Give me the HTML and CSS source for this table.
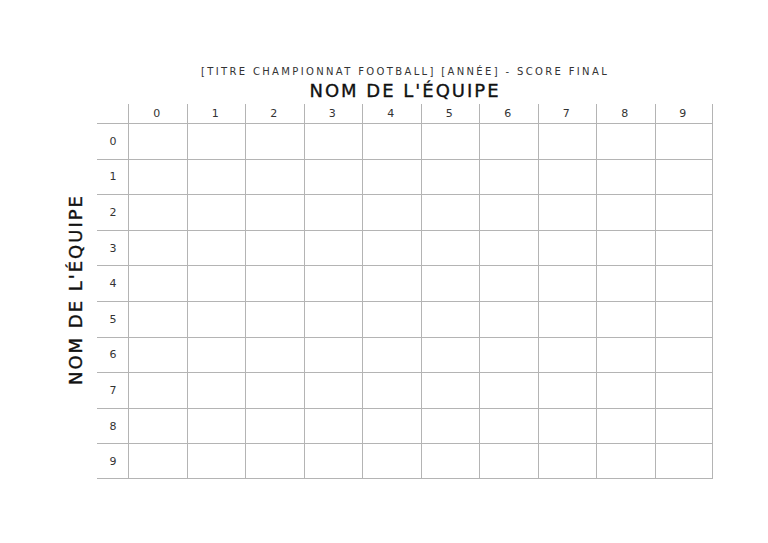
FILE: index.html
```html
<!DOCTYPE html>
<html lang="fr">
<head>
<meta charset="utf-8">
<title>Score final</title>
<link rel="stylesheet" href="styles.css">
</head>
<body>
<div class="page">
  <header class="titles">
    <div class="subtitle">[TITRE CHAMPIONNAT FOOTBALL] [ANNÉE] - SCORE FINAL</div>
    <div class="team team-top">NOM DE L'ÉQUIPE</div>
  </header>
  <div class="board">
    <div class="side"><span class="team team-side">NOM DE L'ÉQUIPE</span></div>
    <div class="grid">
      <div class="corner"></div>
      <div class="ch">0</div><div class="ch">1</div><div class="ch">2</div><div class="ch">3</div><div class="ch">4</div><div class="ch">5</div><div class="ch">6</div><div class="ch">7</div><div class="ch">8</div><div class="ch last-col">9</div>

      <div class="rh">0</div><div class="c"></div><div class="c"></div><div class="c"></div><div class="c"></div><div class="c"></div><div class="c"></div><div class="c"></div><div class="c"></div><div class="c"></div><div class="c last-col"></div>
      <div class="rh">1</div><div class="c"></div><div class="c"></div><div class="c"></div><div class="c"></div><div class="c"></div><div class="c"></div><div class="c"></div><div class="c"></div><div class="c"></div><div class="c last-col"></div>
      <div class="rh">2</div><div class="c"></div><div class="c"></div><div class="c"></div><div class="c"></div><div class="c"></div><div class="c"></div><div class="c"></div><div class="c"></div><div class="c"></div><div class="c last-col"></div>
      <div class="rh">3</div><div class="c"></div><div class="c"></div><div class="c"></div><div class="c"></div><div class="c"></div><div class="c"></div><div class="c"></div><div class="c"></div><div class="c"></div><div class="c last-col"></div>
      <div class="rh">4</div><div class="c"></div><div class="c"></div><div class="c"></div><div class="c"></div><div class="c"></div><div class="c"></div><div class="c"></div><div class="c"></div><div class="c"></div><div class="c last-col"></div>
      <div class="rh">5</div><div class="c"></div><div class="c"></div><div class="c"></div><div class="c"></div><div class="c"></div><div class="c"></div><div class="c"></div><div class="c"></div><div class="c"></div><div class="c last-col"></div>
      <div class="rh">6</div><div class="c"></div><div class="c"></div><div class="c"></div><div class="c"></div><div class="c"></div><div class="c"></div><div class="c"></div><div class="c"></div><div class="c"></div><div class="c last-col"></div>
      <div class="rh">7</div><div class="c"></div><div class="c"></div><div class="c"></div><div class="c"></div><div class="c"></div><div class="c"></div><div class="c"></div><div class="c"></div><div class="c"></div><div class="c last-col"></div>
      <div class="rh">8</div><div class="c"></div><div class="c"></div><div class="c"></div><div class="c"></div><div class="c"></div><div class="c"></div><div class="c"></div><div class="c"></div><div class="c"></div><div class="c last-col"></div>
      <div class="rh last-row">9</div><div class="c last-row"></div><div class="c last-row"></div><div class="c last-row"></div><div class="c last-row"></div><div class="c last-row"></div><div class="c last-row"></div><div class="c last-row"></div><div class="c last-row"></div><div class="c last-row"></div><div class="c last-col last-row"></div>
    </div>
  </div>
</div>
</body>
</html>
```

FILE: styles.css
```css
* { box-sizing: border-box; }
html, body { margin: 0; padding: 0; background: #fff; }
body {
  width: 768px;
  height: 543px;
  font-family: "DejaVu Sans", "Liberation Sans", sans-serif;
  color: #222;
}
.page {
  display: flex;
  flex-direction: column;
  padding: 66px 0 0 66px;
}
.titles {
  margin-left: 31px;
  width: 616px;
  text-align: center;
}
.subtitle {
  font-size: 10px;
  line-height: 12px;
  letter-spacing: 2.35px;
  color: #333;
  white-space: nowrap;
}
.team {
  font-size: 18px;
  line-height: 22px;
  letter-spacing: 2px;
  color: #111;
  -webkit-text-stroke: 0.35px #111;
  white-space: nowrap;
}
.team-top {
  margin-top: 2px;
}
.board {
  display: flex;
  margin-top: 2px;
}
.side {
  width: 31px;
  display: flex;
  align-items: center;
  padding-left: 1px;
  padding-bottom: 4px;
}
.team-side {
  writing-mode: vertical-rl;
  transform: rotate(180deg);
  line-height: 18px;
}
.grid {
  display: grid;
  grid-template-columns: 31px repeat(10, 58.5px);
  grid-template-rows: 19px repeat(10, 35.6px);
  font-size: 11px;
  color: #333;
}
.ch {
  border-left: 1px solid #b4b4b4;
  display: flex;
  align-items: center;
  justify-content: center;
  padding-bottom: 1px;
  padding-right: 2px;
}
.rh {
  border-top: 1px solid #b4b4b4;
  display: flex;
  align-items: center;
  justify-content: center;
  padding-left: 1px;
}
.c {
  border-left: 1px solid #b4b4b4;
  border-top: 1px solid #b4b4b4;
}
.last-col { border-right: 1px solid #b4b4b4; }
.last-row { border-bottom: 1px solid #b4b4b4; }
```
